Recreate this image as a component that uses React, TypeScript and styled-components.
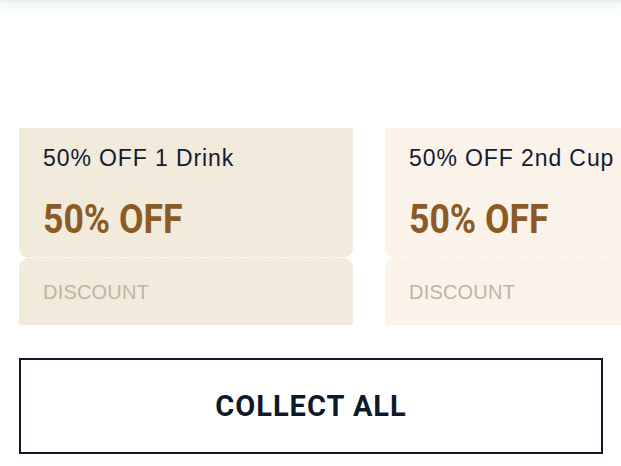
import React from "react";
import styled, { createGlobalStyle, css } from "styled-components";

const GlobalStyle = createGlobalStyle`
  html, body {
    margin: 0;
    padding: 0;
    background: #ffffff;
    overflow: hidden;
  }
  body {
    font-family: "Liberation Sans", Arial, sans-serif;
  }
`;

const Page = styled.div`
  width: 621px;
  height: 466px;
  display: flex;
  flex-direction: column;
  background: #ffffff;
  overflow: hidden;
`;

const TopShade = styled.div`
  height: 4px;
  background: linear-gradient(#e7efec, #f3f7f6);
  box-shadow: 0 3px 10px rgba(200, 220, 214, 0.45);
`;

const Content = styled.div`
  display: flex;
  flex-direction: column;
  gap: 33px;
  padding: 124px 18px 0 19px;
`;

const CouponRow = styled.div`
  display: flex;
  gap: 32px;
  margin-right: -18px;
  overflow: hidden;
`;

type Tone = "warm" | "light";

const tones: Record<Tone, string> = {
  warm: "#f2eadb",
  light: "#fbf3ea",
};

const Coupon = styled.div`
  flex: 0 0 334px;
  display: flex;
  flex-direction: column;
`;

const CouponTop = styled.div<{ $tone: Tone }>(
  ({ $tone }) => css`
    position: relative;
    height: 130px;
    box-sizing: border-box;
    padding: 17px 24px 0 24px;
    background: ${tones[$tone]};
    border-radius: 2px 2px 10px 10px;

    &::after {
      content: "";
      position: absolute;
      left: 10px;
      right: 10px;
      bottom: 0;
      border-bottom: 1px dashed rgba(255, 255, 255, 0.85);
    }
  `
);

const CouponBottom = styled.div<{ $tone: Tone }>(
  ({ $tone }) => css`
    height: 67px;
    box-sizing: border-box;
    padding: 23px 24px 0 24px;
    background: ${tones[$tone]};
    border-radius: 10px 10px 2px 2px;
  `
);

const Title = styled.div`
  font-size: 23px;
  line-height: 26px;
  letter-spacing: 0.9px;
  color: #141a30;
  white-space: nowrap;
`;

const Amount = styled.div`
  margin-top: 25px;
  font-family: Roboto, "Liberation Sans", sans-serif;
  font-size: 40px;
  line-height: 47px;
  font-weight: 700;
  color: #8a5b26;
  transform: scaleX(0.89);
  transform-origin: left center;
`;

const Kind = styled.div`
  font-size: 20px;
  line-height: 23px;
  color: #bfb5a5;
  letter-spacing: 0.2px;
`;

const CollectButton = styled.button`
  width: 584px;
  height: 96px;
  box-sizing: border-box;
  border: 2px solid #0e192b;
  background: #ffffff;
  font-family: Roboto, "Liberation Sans", sans-serif;
  font-size: 29px;
  font-weight: 700;
  letter-spacing: 1px;
  color: #0e192b;
  cursor: pointer;
`;

const coupons: { title: string; amount: string; kind: string; tone: Tone }[] = [
  { title: "50% OFF 1 Drink", amount: "50% OFF", kind: "DISCOUNT", tone: "warm" },
  { title: "50% OFF 2nd Cup", amount: "50% OFF", kind: "DISCOUNT", tone: "light" },
];

export default function App() {
  return (
    <Page>
      <GlobalStyle />
      <TopShade />
      <Content>
        <CouponRow>
          {coupons.map((c) => (
            <Coupon key={c.title}>
              <CouponTop $tone={c.tone}>
                <Title>{c.title}</Title>
                <Amount>{c.amount}</Amount>
              </CouponTop>
              <CouponBottom $tone={c.tone}>
                <Kind>{c.kind}</Kind>
              </CouponBottom>
            </Coupon>
          ))}
        </CouponRow>
        <CollectButton>COLLECT ALL</CollectButton>
      </Content>
    </Page>
  );
}
